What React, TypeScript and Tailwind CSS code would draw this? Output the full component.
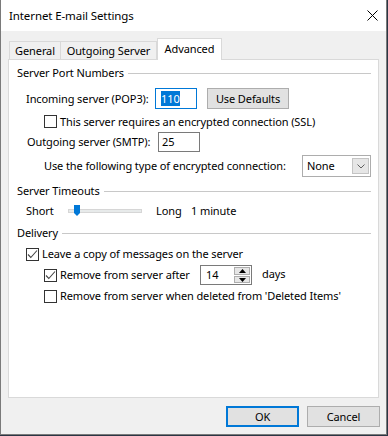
import React from "react";

function Checkbox({ checked }: { checked?: boolean }) {
  return (
    <span className="w-[13px] h-[13px] border border-[#333333] bg-white shrink-0 flex items-center justify-center">
      {checked && (
        <svg width="11" height="11" viewBox="0 0 11 11">
          <polyline points="1,5.5 3.8,8.5 10,1.5" fill="none" stroke="#444" strokeWidth="1.1" />
        </svg>
      )}
    </span>
  );
}

function GroupHeader({ text, className }: { text: string; className: string }) {
  return (
    <div className={"flex items-center h-[18px] pl-[8px] pr-[7px] " + className}>
      <span className="leading-[16px] whitespace-nowrap">{text}</span>
      <div className="flex-1 h-px bg-[#c8c8c8] ml-[4px]" />
    </div>
  );
}

export default function App() {
  return (
    <div className="w-[388px] h-[436px] bg-[#2b3544] overflow-hidden font-['Noto_Sans',sans-serif] text-[11px] tracking-[-0.1px] text-black">
      <div className="w-[387px] h-[435px] flex flex-col border-l border-r border-b border-[#7a7a7a] bg-[#f0f0f0]">
        {/* Title bar */}
        <div className="h-[31px] bg-white flex items-center justify-between pl-[8px] pr-[8px] shrink-0">
          <span className="leading-[16px] text-[11.5px]">Internet E-mail Settings</span>
          <svg width="11" height="11" viewBox="0 0 11 11">
            <line x1="0.5" y1="0.5" x2="10.5" y2="10.5" stroke="#000" strokeWidth="1" />
            <line x1="10.5" y1="0.5" x2="0.5" y2="10.5" stroke="#000" strokeWidth="1" />
          </svg>
        </div>

        {/* Tabs */}
        <div className="mt-[7px] h-[21px] flex items-end pl-[8px] shrink-0">
          <div className="w-[52px] h-[18px] border-l border-t border-r border-[#d9d9d9] flex items-center justify-center leading-[16px]">
            General
          </div>
          <div className="w-[96px] h-[18px] border-t border-r border-[#d9d9d9] flex items-center justify-center leading-[16px]">
            Outgoing Server
          </div>
          <div className="relative z-10 -mb-[1px] w-[65px] h-[22px] border-l border-t border-r border-[#d9d9d9] bg-white flex items-start justify-center pt-[2px] leading-[16px]">
            Advanced
          </div>
        </div>

        {/* Panel */}
        <div className="ml-[7px] w-[371px] h-[339px] border border-[#d9d9d9] bg-white flex flex-col shrink-0">
          <GroupHeader text="Server Port Numbers" className="mt-[4px]" />

          <div className="mt-[6px] h-[21px] flex items-center pl-[17px]">
            <span className="w-[129px] leading-[16px] whitespace-nowrap">Incoming server (POP3):</span>
            <div className="w-[42px] h-[21px] border border-[#0078d7] bg-white flex items-center pl-[5px]">
              <span className="bg-[#0078d7] text-white leading-[15px]">110</span>
            </div>
            <div className="ml-[10px] w-[82px] h-[21px] border border-[#adadad] bg-[#e1e1e1] flex items-center justify-center leading-[16px]">
              Use Defaults
            </div>
          </div>

          <div className="mt-[5px] h-[15px] flex items-center pl-[35px]">
            <Checkbox />
            <span className="ml-[3px] leading-[16px] whitespace-nowrap">This server requires an encrypted connection (SSL)</span>
          </div>

          <div className="mt-[3px] h-[20px] flex items-center pl-[18px]">
            <span className="w-[131px] leading-[16px] whitespace-nowrap">Outgoing server (SMTP):</span>
            <div className="w-[42px] h-[20px] border border-[#7a7a7a] bg-white flex items-center pl-[3px] leading-[16px]">
              25
            </div>
          </div>

          <div className="mt-[3px] h-[22px] flex items-center pl-[35px]">
            <span className="w-[258px] leading-[16px] whitespace-nowrap">Use the following type of encrypted connection:</span>
            <div className="w-[69px] h-[22px] border border-[#adadad] bg-white flex items-center justify-between pl-[4px] pr-[1px]">
              <span className="leading-[16px]">None</span>
              <div className="w-[17px] h-[16px] border border-[#c4c4c4] bg-[#e6e6e6] flex items-center justify-center">
                <svg width="8" height="5" viewBox="0 0 8 5">
                  <polyline points="0.5,0.5 4,4 7.5,0.5" fill="none" stroke="#606060" strokeWidth="1" />
                </svg>
              </div>
            </div>
          </div>

          <GroupHeader text="Server Timeouts" className="mt-[5px]" />

          <div className="mt-[1px] h-[20px] flex items-center pl-[17px]">
            <span className="w-[42px] leading-[16px]">Short</span>
            <div className="relative w-[74px] h-[4px] border border-[#d6d6d6] bg-[#e7eaea]">
              <svg className="absolute left-[5px] top-[-5px]" width="6" height="11" viewBox="0 0 6 11">
                <polygon points="0,0 6,0 6,8 3,11 0,8" fill="#0078d7" />
              </svg>
            </div>
            <span className="ml-[14px] w-[35px] leading-[16px]">Long</span>
            <span className="leading-[16px] whitespace-nowrap">1 minute</span>
          </div>

          <GroupHeader text="Delivery" className="mt-[3px]" />

          <div className="mt-[4px] h-[16px] flex items-center pl-[17px]">
            <Checkbox checked />
            <span className="ml-[3px] leading-[16px] whitespace-nowrap">Leave a copy of messages on the server</span>
          </div>

          <div className="mt-[3px] h-[20px] flex items-center pl-[35px]">
            <div className="w-[156px] flex items-center">
              <Checkbox checked />
              <span className="ml-[3px] leading-[16px] whitespace-nowrap">Remove from server after</span>
            </div>
            <div className="w-[52px] h-[20px] border border-[#7a7a7a] bg-white flex items-center justify-between pl-[5px] pr-[1px]">
              <span className="leading-[16px]">14</span>
              <div className="w-[16px] h-[16px] flex flex-col gap-[1px]">
                <div className="h-[8px] bg-[#e6e6e6] border border-[#adadad] flex items-center justify-center">
                  <svg width="7" height="4" viewBox="0 0 7 4">
                    <polygon points="3.5,0 7,4 0,4" fill="#000" />
                  </svg>
                </div>
                <div className="h-[7px] bg-[#e6e6e6] border border-[#adadad] flex items-center justify-center">
                  <svg width="7" height="4" viewBox="0 0 7 4">
                    <polygon points="0,0 7,0 3.5,4" fill="#000" />
                  </svg>
                </div>
              </div>
            </div>
            <span className="ml-[10px] leading-[16px] -mt-[3px]">days</span>
          </div>

          <div className="mt-[3px] h-[16px] flex items-center pl-[35px]">
            <Checkbox />
            <span className="ml-[3px] leading-[16px] whitespace-nowrap">Remove from server when deleted from 'Deleted Items'</span>
          </div>
        </div>

        {/* Buttons */}
        <div className="mt-[8px] flex justify-end gap-[8px] pr-[6px] shrink-0">
          <div className="w-[73px] h-[21px] border-2 border-[#0078d7] bg-[#e1e1e1] flex items-center justify-center leading-[16px]">
            OK
          </div>
          <div className="w-[73px] h-[21px] border border-[#adadad] bg-[#e1e1e1] flex items-center justify-center leading-[16px]">
            Cancel
          </div>
        </div>
      </div>
    </div>
  );
}
